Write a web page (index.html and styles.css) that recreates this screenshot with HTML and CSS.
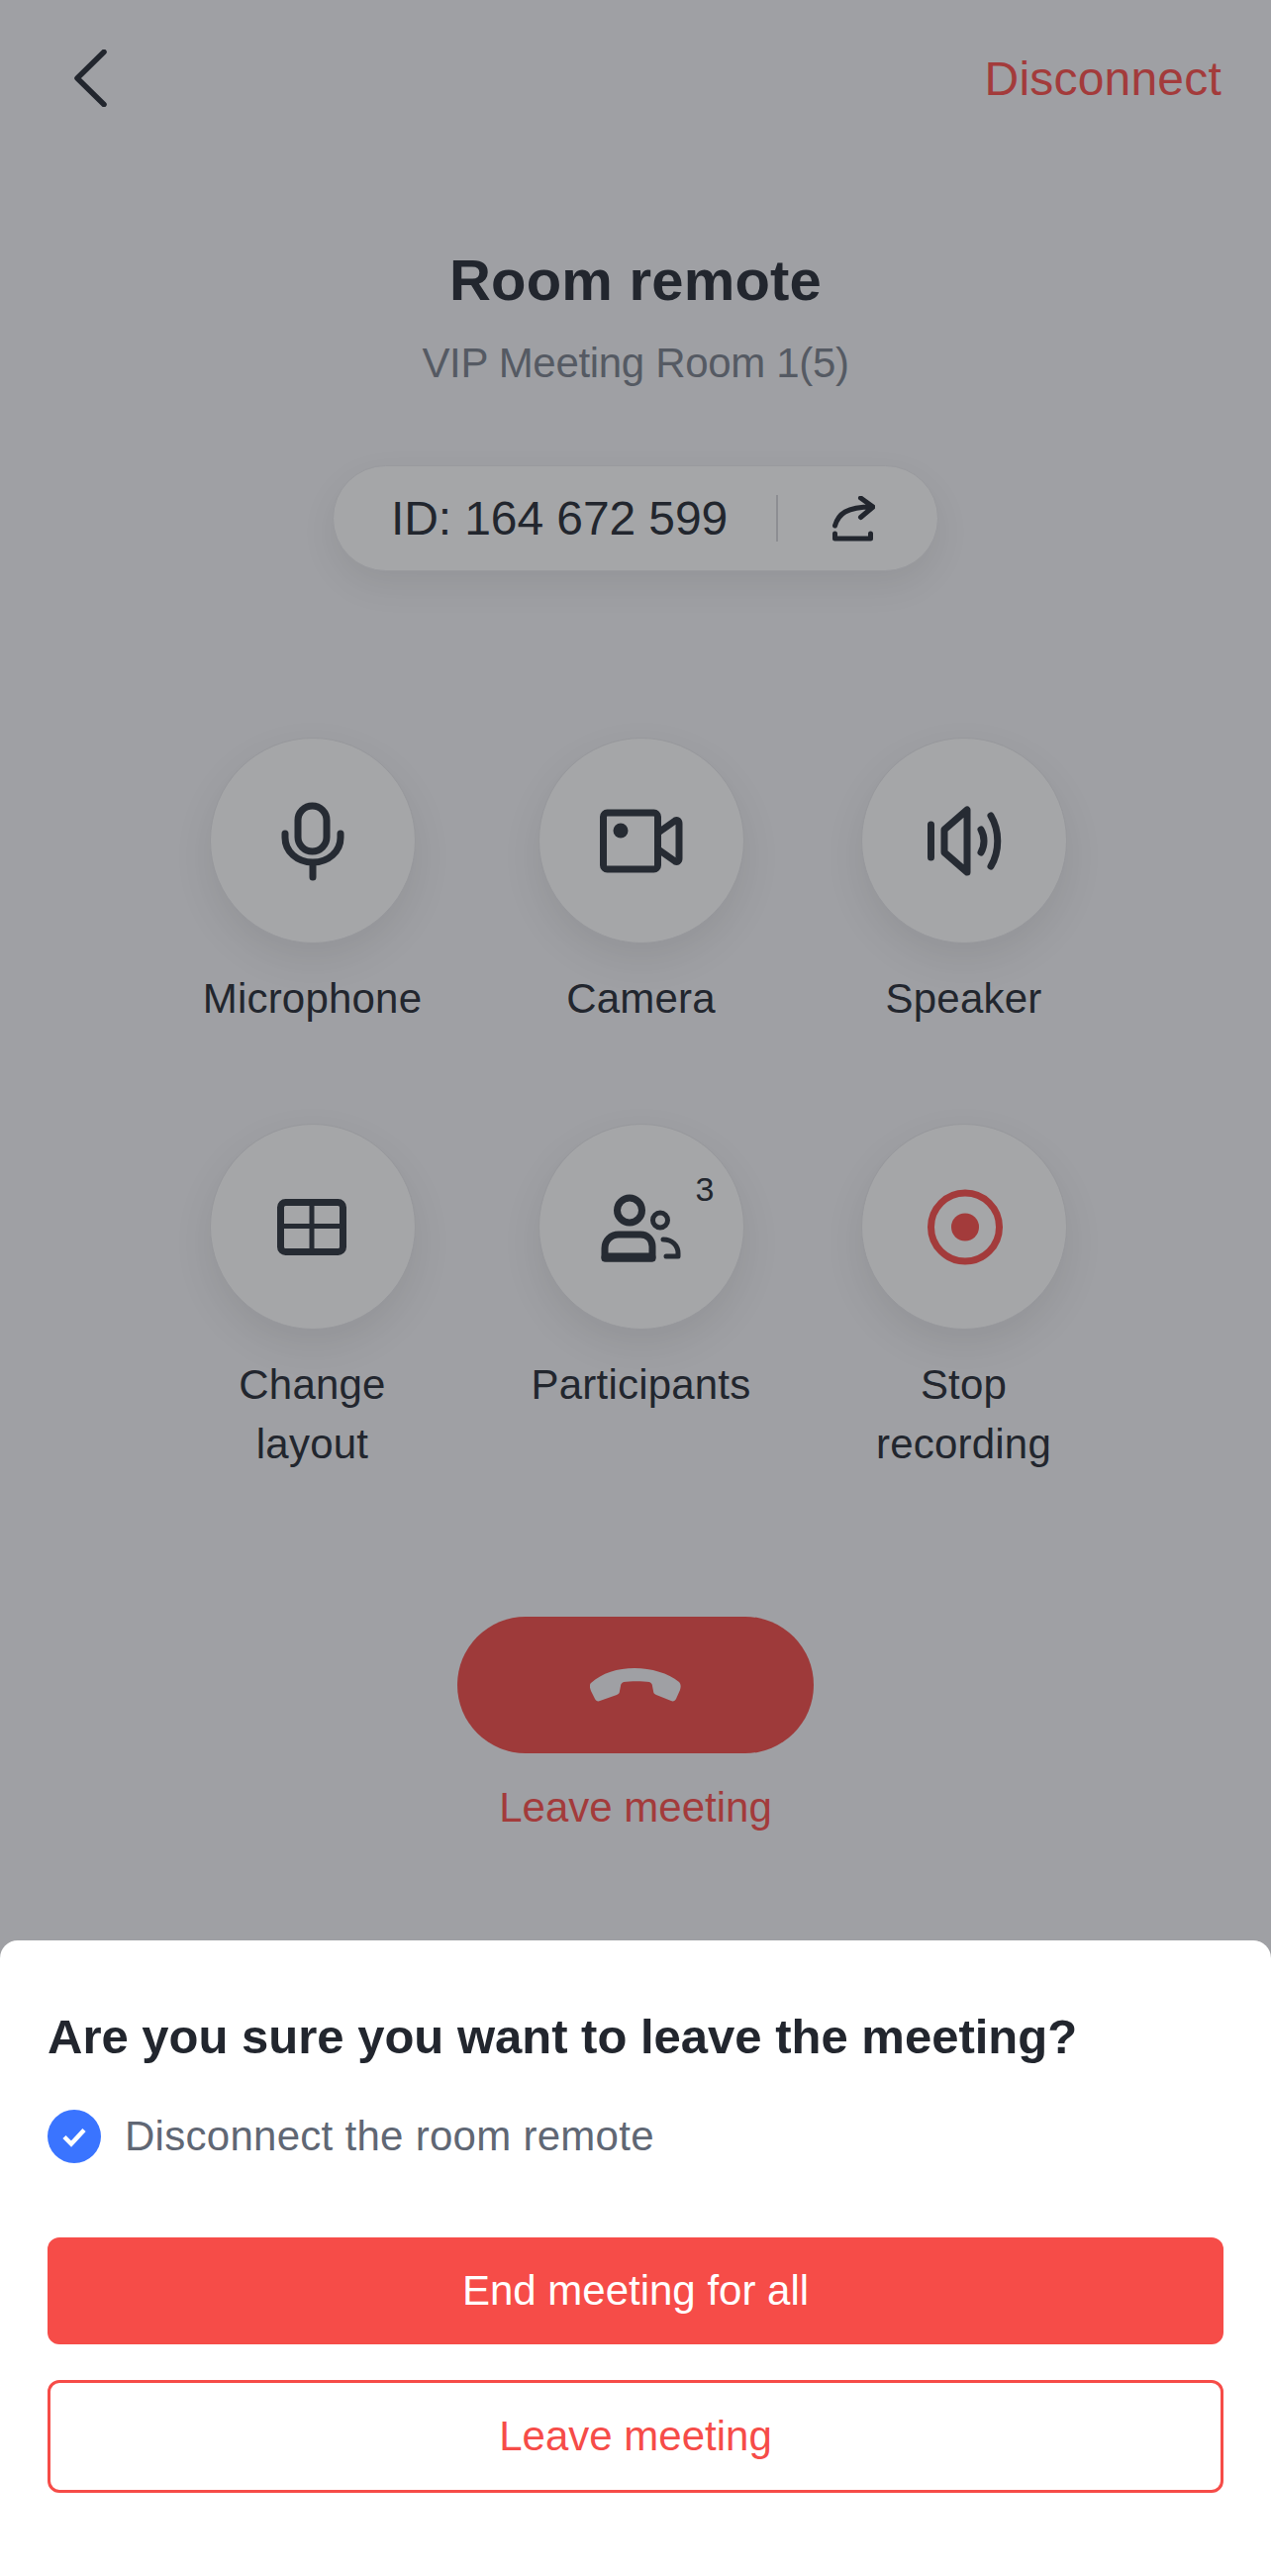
FILE: index.html
```html
<!DOCTYPE html>
<html lang="en">
<head>
    <meta charset="UTF-8">
    <meta name="viewport" content="width=device-width, initial-scale=1.0">
    <title>Room remote</title>
    <link rel="stylesheet" href="styles.css">
</head>
<body>
    <main class="page">
        <header class="topbar">
            <svg class="back" width="33" height="58" viewBox="0 0 33 58"><path d="M30 2.500L3 29l27 26.500"/></svg>
            <span class="disconnect">Disconnect</span>
        </header>

        <h1 class="room-name">Room remote</h1>
        <p class="room-sub">VIP Meeting Room 1(5)</p>

        <div class="id-pill">
            <span class="id-text">ID: 164 672 599</span>
            <span class="id-line"></span>
            <svg class="share" width="44" height="46" viewBox="0 0 44 46"><path d="M3.500 30C7 18 15 11 41 11M29.500 2L42 11 29.500 21.500"/><path d="M3.500 38v5h36v-5"/></svg>
        </div>

        <!-- Кнопки управления -->
        <section class="controls">
            <div class="control">
                <div class="circle">
                    <svg class="icon" viewBox="0 0 96 96"><rect x="33" y="13" width="29" height="46" rx="14.500"/><path d="M20 41v4c0 14 12 25 28 25s28-11 28-25v-4M48 70v15"/></svg>
                </div>
                <span class="label">Microphone</span>
            </div>
            <div class="control">
                <div class="circle">
                    <svg class="icon" viewBox="0 0 96 96"><rect x="9.500" y="20" width="55" height="57" rx="4"/><path d="M65 40l17-12c2-1 4 0 4 3v35c0 3-2 4-4 3L65 57"/><circle class="solid" cx="27" cy="38" r="7.500"/></svg>
                </div>
                <span class="label">Camera</span>
            </div>
            <div class="control">
                <div class="circle">
                    <svg class="icon" viewBox="0 0 96 96"><path d="M14.500 32v33M28 37l23-20v63L28 60zM65 37c4 7 4 16 0 23M75 23c9 15 9 36 0 51"/></svg>
                </div>
                <span class="label">Speaker</span>
            </div>
            <div class="control">
                <div class="circle">
                    <svg class="icon" viewBox="0 0 96 96"><rect x="15.500" y="23.500" width="63" height="50" rx="5"/><path class="thin" d="M47 24v49M16 47.500h62"/></svg>
                </div>
                <span class="label">Change<br>layout</span>
            </div>
            <div class="control">
                <div class="circle">
                    <svg class="icon" viewBox="0 0 96 96"><circle cx="36" cy="31.500" r="12.500"/><path d="M11 80V70c0-8 6-14 14-14h22c7 0 12 5 12 12v12z"/><path class="thick" d="M12 79h46"/><circle class="thin" cx="67" cy="41.500" r="7.500"/><path class="thin" d="M70 61c9 0 15 6 15 14v3H73"/></svg>
                    <span class="count">3</span>
                </div>
                <span class="label">Participants</span>
            </div>
            <div class="control">
                <div class="circle">
                    <svg class="icon record" viewBox="0 0 96 96"><circle cx="49" cy="48.500" r="34.500"/><circle class="solid" cx="49" cy="48.500" r="14"/></svg>
                </div>
                <span class="label">Stop<br>recording</span>
            </div>
        </section>

        <button class="hangup">
            <svg width="92" height="34" viewBox="0 0 92 34"><path d="M1 15C12 5 28 0 45 0s34 5 45 14c2 2 2 5 1 8l-4 9c-1 2-3 3-5 2l-15-6c-2-1-3-2-3-4l-1-5c0-2-1-3-3-4-6-1-20-1-26 0-2 1-3 2-3 4l-1 5c0 2-1 3-3 4L10 33c-2 1-4 0-5-2l-4-8c-1-3-2-6 0-8z"/></svg>
        </button>
        <span class="hangup-label">Leave meeting</span>
    </main>

    <!-- Нижняя панель -->
    <div class="sheet">
        <h2 class="sheet-title">Are you sure you want to leave the meeting?</h2>
        <div class="check-row">
            <svg class="check" width="54" height="54" viewBox="0 0 54 54"><circle cx="27" cy="27" r="27"/><path d="M17 27.500l7 7 13-14"/></svg>
            <span>Disconnect the room remote</span>
        </div>
        <button class="btn btn-end">End meeting for all</button>
        <button class="btn btn-leave">Leave meeting</button>
    </div>
</body>
</html>
```

FILE: styles.css
```css
* {
    box-sizing: border-box;
}
html, body {
    margin: 0;
    height: 2602px;
}
body {
    position: relative;
    overflow: hidden;
    font-family: "Liberation Sans", Arial, sans-serif;
    background-color: #9fa0a4;
    color: #22262e;
}
.page {
    display: flex;
    flex-direction: column;
    align-items: center;
}
.topbar {
    width: 100%;
    display: flex;
    justify-content: space-between;
    align-items: flex-start;
    padding: 50px 50px 0 75px;
}
.back path {
    fill: none;
    stroke: #22262e;
    stroke-width: 5.500;
    stroke-linecap: round;
    stroke-linejoin: round;
}
.disconnect {
    font-size: 48px;
    line-height: 60px;
    letter-spacing: 0.2px;
    color: #a33b3b;
}
.room-name {
    margin: 138px 0 0;
    font-size: 58px;
    line-height: 70px;
    font-weight: bold;
    letter-spacing: 0.2px;
}
.room-sub {
    margin: 22px 0 0;
    font-size: 42px;
    line-height: 54px;
    letter-spacing: -0.33px;
    color: #555a63;
}
.id-pill {
    margin-top: 76px;
    width: 612px;
    height: 107px;
    display: flex;
    align-items: center;
    padding-left: 58px;
    background-color: #a5a6a8;
    border: 1px solid #999a9e;
    border-radius: 54px;
    box-shadow: 0 14px 36px rgba(0, 0, 0, 0.07);
}
.id-text {
    font-size: 48px;
    letter-spacing: -0.1px;
    white-space: nowrap;
}
.id-line {
    width: 2px;
    height: 47px;
    margin: 0 54px 0 49px;
    background-color: #8d8e92;
}
.share path {
    fill: none;
    stroke: #22262e;
    stroke-width: 5;
    stroke-linecap: round;
    stroke-linejoin: round;
}
.controls {
    align-self: flex-start;
    margin: 168px 0 0 150px;
    display: grid;
    grid-template-columns: 331px 333px 319px;
    row-gap: 96px;
}
.control {
    display: flex;
    flex-direction: column;
    align-items: center;
}
.circle {
    position: relative;
    width: 208px;
    height: 208px;
    display: flex;
    align-items: center;
    justify-content: center;
    background-color: #a5a6a8;
    border: 1px solid #97989c;
    border-radius: 50%;
    box-shadow: 0 16px 40px rgba(0, 0, 0, 0.08);
}
.icon {
    width: 96px;
    height: 96px;
    fill: none;
    stroke: #262b33;
    stroke-width: 7;
    stroke-linecap: round;
    stroke-linejoin: round;
}
.icon .solid {
    fill: #262b33;
    stroke: none;
}
.icon .thin {
    stroke-width: 5;
}
.icon .thick {
    stroke-width: 9;
}
.icon.record {
    stroke: #a33b3b;
}
.icon.record .solid {
    fill: #a33b3b;
}
.count {
    position: absolute;
    top: 45px;
    right: 29px;
    font-size: 34px;
    line-height: 40px;
}
.label {
    margin-top: 26px;
    font-size: 42px;
    line-height: 60px;
    letter-spacing: 0.2px;
    text-align: center;
}
.hangup {
    margin-top: 144px;
    width: 360px;
    height: 138px;
    padding: 0;
    border: none;
    border-radius: 69px;
    background-color: #9e3a3a;
    display: flex;
    align-items: center;
    justify-content: center;
}
.hangup path {
    fill: #9fa0a4;
}
.hangup-label {
    margin-top: 25px;
    font-size: 42px;
    line-height: 60px;
    color: #a33b3b;
}
.sheet {
    position: absolute;
    left: 0;
    right: 0;
    bottom: 0;
    height: 642px;
    padding: 62px 48px 0;
    background-color: #fff;
    border-radius: 18px 18px 0 0;
}
.sheet-title {
    margin: 0;
    font-size: 49px;
    line-height: 70px;
    font-weight: bold;
}
.check-row {
    margin-top: 39px;
    display: flex;
    align-items: center;
    gap: 24px;
    font-size: 42px;
    line-height: 54px;
    letter-spacing: 0.28px;
    color: #606774;
}
.check circle {
    fill: #3a74ff;
}
.check path {
    fill: none;
    stroke: #fff;
    stroke-width: 4.500;
}
.btn {
    display: block;
    width: 100%;
    font-family: inherit;
    font-size: 42px;
    border-radius: 12px;
}
.btn-end {
    margin-top: 75px;
    height: 108px;
    color: #fff;
    background-color: #f64c48;
    border: none;
}
.btn-leave {
    margin-top: 36px;
    height: 114px;
    color: #f64c48;
    background-color: #fff;
    border: 3px solid #f64c48;
}
```
